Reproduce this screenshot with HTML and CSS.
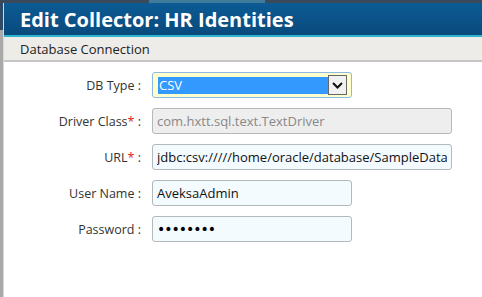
FILE: index.html
```html
<!DOCTYPE html>
<html>
<head>
    <title>Edit Collector</title>
    <link rel="stylesheet" href="styles.css">
</head>
<body>
    <div class="top-strip"><span class="top-tab"></span></div>

    <div class="window">
        <div class="edge"></div>

        <div class="dialog">
            <header class="title-bar">
                <h1>Edit Collector: HR Identities</h1>
            </header>

            <div class="section-head">Database Connection</div>

            <form class="form">
                <label class="label">DB Type :</label>
                <div class="select">
                    <span class="select-value">CSV</span>
                    <span class="select-btn">
                        <svg width="11" height="7" viewBox="0 0 11 7"><path d="M1 1 L5.5 5.5 L10 1" fill="none" stroke="#111" stroke-width="2"/></svg>
                    </span>
                </div>

                <label class="label">Driver Class<span class="req">*</span> :</label>
                <input class="field wide" type="text" value="com.hxtt.sql.text.TextDriver" disabled>

                <label class="label">URL<span class="req">*</span> :</label>
                <input class="field wide" type="text" value="jdbc:csv://///home/oracle/database/SampleData">

                <label class="label">User Name :</label>
                <input class="field" type="text" value="AveksaAdmin">

                <label class="label">Password :</label>
                <input class="field secret" type="password" value="password">
            </form>
        </div>
    </div>
</body>
</html>
```

FILE: styles.css
```css
body {
    margin: 0;
    padding: 0;
    font-family: "Open Sans", Arial, sans-serif;
    background: #fff;
    overflow: hidden;
}

.top-strip {
    height: 3px;
    background: #3a4a5b;
    padding-left: 149px;
}

.top-tab {
    display: block;
    width: 116px;
    height: 3px;
    background: #3f7c9c;
}

.window {
    display: flex;
    height: 294px;
}

.edge {
    width: 3px;
    flex: none;
    background: linear-gradient(#2e4a66 0 27px, #a9a9a9 27px);
}

.dialog {
    flex: 1;
    border-left: 1px solid #d8d8d8;
}

.title-bar {
    height: 32px;
    background: linear-gradient(#0c5b95, #094a7c);
    border-bottom: 2px solid #2db5cd;
    padding-left: 16px;
    display: flex;
    align-items: center;
}

.title-bar h1 {
    margin: 0;
    color: #fff;
    font-size: 20px;
    font-weight: 700;
}

.section-head {
    height: 23px;
    background: #eeece8;
    border-bottom: 2px solid #c6c6c6;
    padding-left: 16px;
    font-size: 13px;
    color: #222;
    display: flex;
    align-items: center;
}

.form {
    display: grid;
    grid-template-columns: 137px auto;
    column-gap: 11px;
    row-gap: 10px;
    align-items: center;
    justify-items: start;
    padding-top: 10px;
}

.label {
    justify-self: end;
    font-size: 12.5px;
    color: #333;
}

.req {
    color: #e02020;
}

.select {
    box-sizing: border-box;
    width: 200px;
    height: 26px;
    background: #ffffcc;
    border: 1px solid #8db8e6;
    border-radius: 3px;
    display: flex;
    align-items: center;
    padding: 0 4px 0 5px;
}

.select-value {
    flex: 1;
    height: 17px;
    background: #3399ff;
    color: #fff;
    font-size: 13px;
    line-height: 17px;
    padding-left: 1px;
}

.select-btn {
    box-sizing: border-box;
    width: 19px;
    height: 20px;
    border: 1px solid #666;
    background: #f1f1f1;
    display: flex;
    align-items: center;
    justify-content: center;
}

.field {
    box-sizing: border-box;
    width: 200px;
    height: 26px;
    background: #f4fbff;
    border: 1px solid #b4b8bb;
    border-radius: 3px;
    padding: 0 4px;
    font-family: "Open Sans", Arial, sans-serif;
    font-size: 13px;
    color: #111;
    outline: none;
}

.field.wide {
    width: 300px;
}

.field.secret {
    font-family: "DejaVu Sans", sans-serif;
    font-size: 14px;
    letter-spacing: -1px;
    color: #000;
}

.field:disabled {
    background: #eeeeee;
    color: #888;
}
```
